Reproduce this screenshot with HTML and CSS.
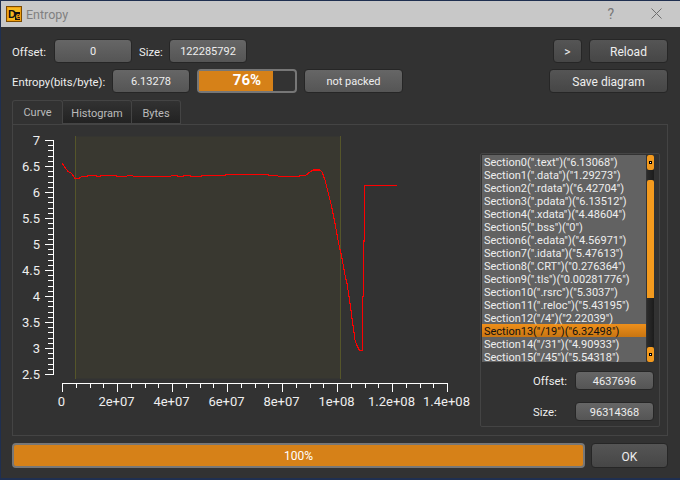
FILE: index.html
```html
<!DOCTYPE html>
<html lang="en">
<head>
  <meta charset="UTF-8">
  <title>Entropy</title>
  <link rel="stylesheet" href="styles.css">
</head>
<body>
  <main class="window">
    <header class="titlebar">
      <svg class="app-icon" width="16" height="16" viewBox="0 0 16 16">
        <rect x="0.5" y="0.5" width="15" height="15" fill="#f0a010" stroke="#7a4a00"/>
        <rect x="2" y="2" width="12" height="12" fill="#f5b820"/>
        <rect x="9" y="6" width="5" height="8" fill="#111"/>
        <text x="2" y="12" class="icon-d">D</text>
        <text x="9.4" y="13" class="icon-e">e</text>
      </svg>
      <span class="title">Entropy</span>
      <span class="help">?</span>
      <svg class="close" width="11" height="11" viewBox="0 0 11 11">
        <path d="M0.5 0.5L10.5 10.5M10.5 0.5L0.5 10.5" stroke="#6e6e6e" fill="none"/>
      </svg>
    </header>

    <div class="content">
      <div class="row">
        <span class="label label-offset">Offset:</span>
        <div class="field">0</div>
        <span class="label label-size">Size:</span>
        <div class="field">122285792</div>
        <div class="spacer"></div>
        <button class="btn btn-small">&gt;</button>
        <button class="btn btn-reload">Reload</button>
      </div>

      <div class="row">
        <span class="label label-entropy">Entropy(bits/byte):</span>
        <div class="field">6.13278</div>
        <div class="gauge">
          <div class="gauge-fill"></div>
          <span class="gauge-text">76%</span>
        </div>
        <div class="status">not packed</div>
        <div class="spacer"></div>
        <button class="btn btn-save">Save diagram</button>
      </div>

      <div class="tabs">
        <div class="tab tab-active">Curve</div>
        <div class="tab tab-histogram">Histogram</div>
        <div class="tab tab-bytes">Bytes</div>
      </div>

      <section class="pane">
        <svg class="plot" width="462" height="290" viewBox="13 125 462 290" id="plot">
          <rect x="75.5" y="136.5" width="265" height="242" fill="#393830" stroke="none"/>
          <path d="M75.5 136V379M340.5 136V379" stroke="#55552a" fill="none"/>
          <g id="ticks" stroke="#fff" fill="none" shape-rendering="crispEdges"></g>
          <g id="labels" class="axis-text"></g>
          <polyline class="curve" points="62.3,163.3 65,167.7 68.3,171.7 71.7,173.3 75,178.3 79.3,178.3 81.7,176.7 86.7,176.7 88,175.3 95.7,175.3 96.7,176.3 100,176.3 101,175.3 115.7,175.3 116.7,176.3 126.7,176.3 127.7,175.3 132.7,175.3 133.3,176.3 170.7,176.3 171.7,175.3 176.7,175.3 177.7,176.3 183.3,176.3 184.3,175.3 190,175.3 191,176.3 201,176.3 202,175.3 225,175.3 226,174.3 267.7,174.3 268.7,175.3 277.7,175.3 278.3,176.3 299,176.3 300,175.3 305.7,175.3 308.3,173.3 311.7,171 313.3,170 319.3,170 322,171.7 325,180 328.3,193.3 331.7,206.7 335,223.3 338.3,241.7 341.7,256.7 345,275 347.3,285 350,303.3 352.7,323.3 355,340 356.7,345 359.3,350.3 362.3,350.3 362.3,296.7 363.3,296.7 363.3,241 364.7,241 364.7,185.7 396.7,185.7"/>
        </svg>

        <aside class="sections">
          <div class="list-wrap">
            <ul class="list" id="list"></ul>
            <div class="scrollbar">
              <div class="sb-btn"><span class="sb-dot"></span></div>
              <div class="sb-track"><div class="sb-handle"></div></div>
              <div class="sb-btn"><span class="sb-dot"></span></div>
            </div>
          </div>
          <div class="section-form">
            <span class="label">Offset:</span>
            <div class="field field-small">4637696</div>
          </div>
          <div class="section-form section-form-last">
            <span class="label label-sec-size">Size:</span>
            <div class="field field-small">96314368</div>
          </div>
        </aside>
      </section>

      <footer class="bottom">
        <div class="progress">100%</div>
        <button class="btn btn-ok">OK</button>
      </footer>
    </div>
  </main>

  <script>
    var sections = [
      'Section0(".text")("6.13068")', 'Section1(".data")("1.29273")',
      'Section2(".rdata")("6.42704")', 'Section3(".pdata")("6.13512")',
      'Section4(".xdata")("4.48604")', 'Section5(".bss")("0")',
      'Section6(".edata")("4.56971")', 'Section7(".idata")("5.47613")',
      'Section8(".CRT")("0.276364")', 'Section9(".tls")("0.00281776")',
      'Section10(".rsrc")("5.3037")', 'Section11(".reloc")("5.43195")',
      'Section12("/4")("2.22039")', 'Section13("/19")("6.32498")',
      'Section14("/31")("4.90933")', 'Section15("/45")("5.54318")'
    ];
    var list = document.getElementById('list');
    sections.forEach(function (s, i) {
      var li = document.createElement('li');
      li.textContent = s;
      if (i === 13) li.className = 'selected';
      list.appendChild(li);
    });

    // axis ticks and labels for the plot
    var NS = 'http://www.w3.org/2000/svg';
    var ticks = document.getElementById('ticks');
    var labels = document.getElementById('labels');
    var d = '';
    for (var i = 0; i <= 45; i++) {
      var y = Math.round(140 + i * 5.2) + 0.5;
      d += 'M' + (i % 5 === 0 ? 45 : 48) + ' ' + y + 'H53.5';
    }
    d += 'M53.5 140V375';
    for (var j = 0; j <= 28; j++) {
      var x = Math.round(62 + j * 13.75) + 0.5;
      d += 'M' + x + ' 383.5V' + (j % 4 === 0 ? 392 : 388);
    }
    d += 'M62 383.5H448';
    var tickPath = document.createElementNS(NS, 'path');
    tickPath.setAttribute('d', d);
    ticks.appendChild(tickPath);

    function addLabel(x, y, str, anchor) {
      var t = document.createElementNS(NS, 'text');
      t.setAttribute('x', x);
      t.setAttribute('y', y);
      t.setAttribute('text-anchor', anchor);
      t.textContent = str;
      labels.appendChild(t);
    }
    ['7', '6.5', '6', '5.5', '5', '4.5', '4', '3.5', '3', '2.5'].forEach(function (s, i) {
      addLabel(40, 145 + i * 26, s, 'end');
    });
    ['0', '2e+07', '4e+07', '6e+07', '8e+07', '1e+08', '1.2e+08', '1.4e+08'].forEach(function (s, i) {
      addLabel(61.5 + i * 55, 406, s, 'middle');
    });
  </script>
</body>
</html>
```

FILE: styles.css
```css
html, body {
  margin: 0;
  height: 100%;
  overflow: hidden;
  background: #1f2f50;
}
body {
  font-family: Roboto, "Open Sans", Arial, sans-serif;
  font-size: 11.3px;
  color: #e8e8e8;
}
.window {
  margin: 1px 0 0 1px;
  height: 477px;
  display: flex;
  flex-direction: column;
  background: #323232;
}
.titlebar {
  height: 26px;
  flex: none;
  display: flex;
  align-items: center;
  background: #c8c8c8;
  padding: 0 18px 0 5px;
}
.app-icon {
  flex: none;
}
.icon-d {
  font: bold 11px "Liberation Sans", sans-serif;
  fill: #111;
}
.icon-e {
  font: bold 9px "Liberation Sans", sans-serif;
  fill: #f0a010;
}
.title {
  margin-left: 4px;
  font-size: 12.5px;
  color: #808080;
  flex: 1;
}
.help {
  font-size: 14px;
  color: #777;
  margin-right: 37px;
}
.close {
  margin-bottom: 1px;
}
.content {
  flex: 1;
  display: flex;
  flex-direction: column;
  padding: 12px 12px 9px 11px;
}
.row {
  display: flex;
  align-items: center;
  height: 24px;
  margin-bottom: 6px;
}
.spacer {
  flex: 1;
}
.label {
  color: #eee;
  white-space: nowrap;
  padding-top: 2px;
}
.label-offset {
  width: 42px;
}
.label-size {
  width: 30px;
  margin-left: 7px;
}
.label-entropy {
  width: 100px;
}
.field, .status, .btn {
  box-sizing: border-box;
  height: 24px;
  border: 1px solid #262626;
  border-radius: 4px;
  background: linear-gradient(#666, #555);
  color: #eee;
  display: flex;
  align-items: center;
  justify-content: center;
  font: inherit;
  font-size: 11px;
  padding: 1px 0 0;
}
.field {
  width: 78px;
}
.btn {
  background: linear-gradient(#555, #464646);
  font-size: 12px;
  padding-top: 2px;
}
.btn-small {
  width: 29px;
  margin-right: 7px;
}
.btn-reload {
  width: 79px;
}
.btn-save {
  width: 119px;
}
.gauge {
  position: relative;
  box-sizing: border-box;
  width: 100px;
  height: 24px;
  margin-left: 7px;
  border: 2px solid #777;
  border-radius: 4px;
  background: #333;
}
.gauge-fill {
  width: 74px;
  height: 100%;
  background: #d68118;
}
.gauge-text {
  position: absolute;
  top: 0;
  left: 0;
  width: 100%;
  line-height: 19px;
  text-align: center;
  font-size: 15px;
  font-weight: bold;
  color: #fff;
}
.status {
  width: 99px;
  margin-left: 7px;
}
.tabs {
  display: flex;
  height: 24px;
  margin-top: 1px;
  position: relative;
  z-index: 1;
}
.tab {
  box-sizing: border-box;
  height: 24px;
  border: 1px solid #444;
  border-left: none;
  border-radius: 0 3px 0 0;
  background: linear-gradient(#323232, #222);
  color: #bbb;
  display: flex;
  align-items: center;
  justify-content: center;
  font-size: 11px;
  padding-top: 3px;
}
.tab-active {
  width: 51px;
  border-left: 1px solid #444;
  border-bottom: none;
  border-radius: 3px 3px 0 0;
  background: #323232;
  padding-top: 0;
}
.tab-histogram {
  width: 69px;
}
.tab-bytes {
  width: 49px;
}
.pane {
  box-sizing: border-box;
  height: 312px;
  border: 1px solid #444;
  display: flex;
  justify-content: space-between;
}
.plot {
  display: block;
}
.axis-text text {
  font-family: Roboto, "Open Sans", sans-serif;
  font-size: 13px;
  fill: #eee;
}
.curve {
  fill: none;
  stroke: #f00;
  stroke-width: 1.1;
  shape-rendering: crispEdges;
}
.sections {
  box-sizing: border-box;
  width: 180px;
  height: 274px;
  margin: 28px 7px 0 0;
  padding: 1px 5px 0 1px;
  border: 1px solid #444;
  border-radius: 2px;
}
.list-wrap {
  display: flex;
  height: 207px;
  background: #626262;
  overflow: hidden;
}
.list {
  list-style: none;
  margin: 0;
  padding: 0;
  flex: 1;
  font-size: 11px;
  color: #eee;
}
.list li {
  height: 13px;
  line-height: 15px;
  padding-left: 2px;
  white-space: nowrap;
}
.list .selected {
  background: linear-gradient(#ee8f1a, #c87512);
  color: #111;
}
.scrollbar {
  flex: none;
  width: 7px;
  border-left: 1px solid #333;
  display: flex;
  flex-direction: column;
  background: #222;
}
.sb-btn {
  flex: none;
  height: 15px;
  background: #f39a1e;
  border-radius: 2px;
  display: flex;
  align-items: center;
  justify-content: center;
}
.sb-dot {
  background: #fff;
  border: 1px solid #000;
  box-sizing: content-box;
  width: 1px;
  height: 1px;
}
.sb-track {
  flex: 1;
  padding-top: 10px;
  padding-bottom: 49px;
  background: linear-gradient(90deg, #2c2c2c, #1c1c1c);
  display: flex;
}
.sb-handle {
  flex: 1;
  background: #f39a1e;
  border-radius: 2px 2px 0 0;
}
.section-form {
  display: flex;
  align-items: center;
  justify-content: flex-end;
  margin-top: 9px;
}
.section-form .label {
  margin-right: 7px;
  width: 35px;
}
.section-form-last {
  margin-top: 12px;
}
.field-small {
  width: 79px;
  height: 19px;
}
.bottom {
  display: flex;
  margin-top: 7px;
  height: 25px;
}
.progress {
  box-sizing: border-box;
  width: 573px;
  height: 25px;
  margin-right: 6px;
  border: 2px solid #777;
  border-radius: 4px;
  background: #d68118;
  color: #fff;
  text-align: center;
  line-height: 22px;
  font-size: 12px;
}
.btn-ok {
  width: 77px;
  height: 25px;
}
```
